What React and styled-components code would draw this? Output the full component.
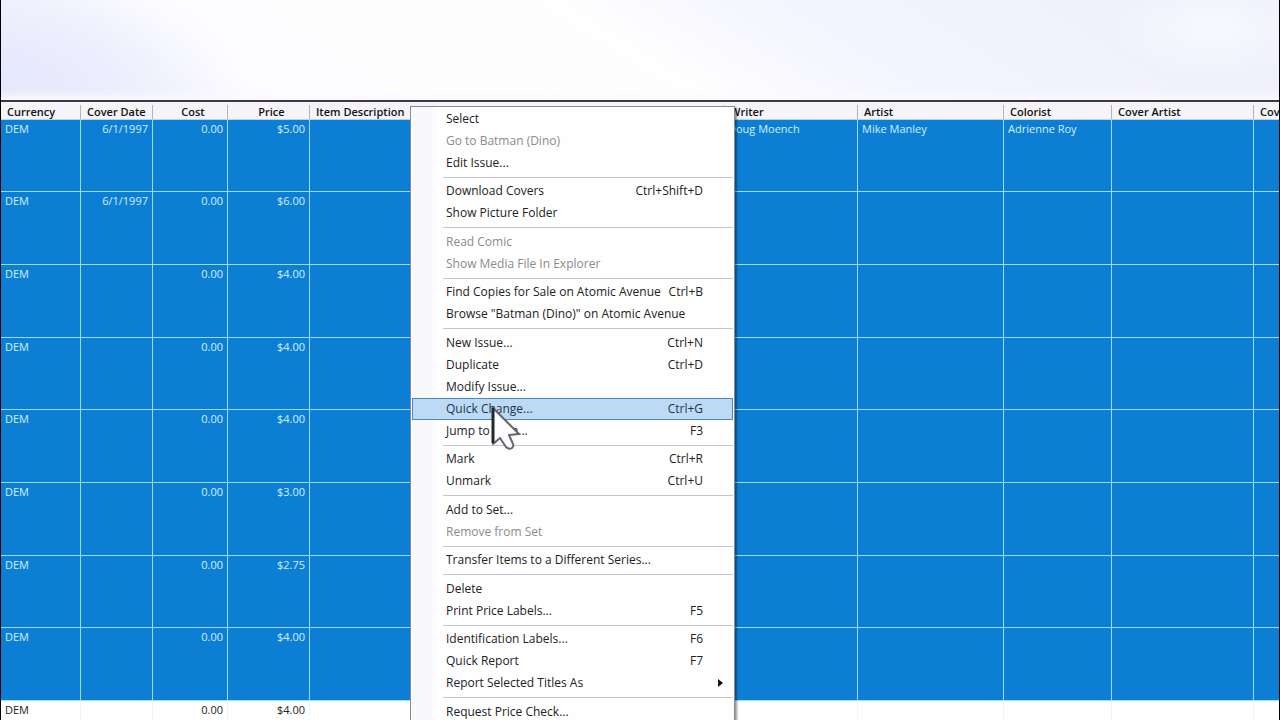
import React from 'react'
import styled, { createGlobalStyle } from 'styled-components'

const columns = [
    { key: 'currency', title: 'Currency', width: 80 },
    { key: 'coverDate', title: 'Cover Date', width: 72, align: 'right' },
    { key: 'cost', title: 'Cost', width: 75, align: 'right', center: true },
    { key: 'price', title: 'Price', width: 82, align: 'right', center: true },
    { key: 'description', title: 'Item Description', width: 414 },
    { key: 'writer', title: 'Writer', width: 134 },
    { key: 'artist', title: 'Artist', width: 146 },
    { key: 'colorist', title: 'Colorist', width: 108 },
    { key: 'coverArtist', title: 'Cover Artist', width: 142 },
    { key: 'cov', title: 'Cov' },
]

const issues = [
    { currency: 'DEM', coverDate: '6/1/1997', cost: '0.00', price: '$5.00', writer: 'Doug Moench', artist: 'Mike Manley', colorist: 'Adrienne Roy', selected: true },
    { currency: 'DEM', coverDate: '6/1/1997', cost: '0.00', price: '$6.00', selected: true },
    { currency: 'DEM', cost: '0.00', price: '$4.00', selected: true },
    { currency: 'DEM', cost: '0.00', price: '$4.00', selected: true },
    { currency: 'DEM', cost: '0.00', price: '$4.00', selected: true },
    { currency: 'DEM', cost: '0.00', price: '$3.00', selected: true },
    { currency: 'DEM', cost: '0.00', price: '$2.75', selected: true },
    { currency: 'DEM', cost: '0.00', price: '$4.00', selected: true },
    { currency: 'DEM', cost: '0.00', price: '$4.00' },
]

const menu = [
    { label: 'Select' },
    { label: 'Go to Batman (Dino)', disabled: true },
    { label: 'Edit Issue...' },
    null,
    { label: 'Download Covers', keys: 'Ctrl+Shift+D' },
    { label: 'Show Picture Folder' },
    null,
    { label: 'Read Comic', disabled: true },
    { label: 'Show Media File In Explorer', disabled: true },
    null,
    { label: 'Find Copies for Sale on Atomic Avenue', keys: 'Ctrl+B' },
    { label: 'Browse "Batman (Dino)" on Atomic Avenue' },
    null,
    { label: 'New Issue...', keys: 'Ctrl+N' },
    { label: 'Duplicate', keys: 'Ctrl+D' },
    { label: 'Modify Issue...' },
    { label: 'Quick Change...', keys: 'Ctrl+G', active: true },
    { label: 'Jump to Item...', keys: 'F3' },
    null,
    { label: 'Mark', keys: 'Ctrl+R' },
    { label: 'Unmark', keys: 'Ctrl+U' },
    null,
    { label: 'Add to Set...' },
    { label: 'Remove from Set', disabled: true },
    null,
    { label: 'Transfer Items to a Different Series...' },
    null,
    { label: 'Delete' },
    { label: 'Print Price Labels...', keys: 'F5' },
    null,
    { label: 'Identification Labels...', keys: 'F6' },
    { label: 'Quick Report', keys: 'F7' },
    { label: 'Report Selected Titles As', submenu: true },
    null,
    { label: 'Request Price Check...' },
]

const ContextMenu = () => (
    <Menu role="menu">
        {menu.map((item, i) => item ? (
            <MenuItem key={i} role="menuitem" disabled={item.disabled} $active={item.active}>
                <span>{item.label}</span>
                {item.keys ? <span>{item.keys}</span> : null}
                {item.submenu ? <Arrow viewBox="0 0 5 8"><path d="M0 0L5 4L0 8Z" /></Arrow> : null}
            </MenuItem>
        ) : <Separator key={i} />)}
    </Menu>
)

const App = () => {
    return (
        <>
            <GlobalStyle />
            <Page>
                <Banner />
                <Table>
                    <colgroup>
                        {columns.map((c) => <Col key={c.key} $width={c.width} />)}
                    </colgroup>
                    <thead>
                        <tr>
                            {columns.map((c) => (
                                <HeadCell key={c.key} $center={c.center}><HeadLabel>{c.title}</HeadLabel></HeadCell>
                            ))}
                        </tr>
                    </thead>
                    <tbody>
                        {issues.map((issue, i) => (
                            <Row key={i} $selected={issue.selected}>
                                {columns.map((c) => <Cell key={c.key} $align={c.align}>{issue[c.key]}</Cell>)}
                            </Row>
                        ))}
                    </tbody>
                </Table>
                <ContextMenu />
                <Cursor viewBox="0 0 32 46">
                    <path d="M3 3V39L10 33L16 42Q19 45 22 43Q24 41 23 39L19 30L29 29Z" />
                    <path className="edge" d="M3 3V38" />
                </Cursor>
            </Page>
        </>
    )
}

export default App;



const GlobalStyle = createGlobalStyle`
  * {
    box-sizing: border-box;
  }
  body {
    margin: 0;
    background: white;
    font-family: 'Open Sans', 'Noto Sans', sans-serif;
    font-size: 11px;
    color: #222;
  }
`;
const Page = styled.main`
  position: relative;
  height: 100vh;
  overflow: hidden;
  border: solid #000;
  border-width: 0 1px;
`;
const Banner = styled.header`
  height: 100px;
  background:
    linear-gradient(to top, rgba(250,249,253,0.9), rgba(250,249,253,0) 10px),
    radial-gradient(ellipse 100px 50px at 95% 28%, #f6faff, rgba(246,250,255,0)),
    radial-gradient(ellipse 240px 120px at 0% 80%, #e6e8fd, rgba(240,240,254,0)),
    linear-gradient(32deg, #f1f0fc 6%, #fdfdff 20%, #fefeff 50%, #f4f5fe 64%, #f2f2fc 80%, #efeffb);
`;
const Table = styled.table`
  width: 100%;
  table-layout: fixed;
  border-collapse: separate;
  border-spacing: 0;
  border-top: 2px solid #3c3a40;
`;
const Col = styled.col`
  width: ${({ $width }) => $width ? $width + 'px' : 'auto'};
`;
const HeadCell = styled.th`
  height: 17px;
  padding: 3px 0 0;
  background: #f6f4f8;
  border-bottom: 1px solid #b5d3ec;
  color: #111;
  font-weight: 600;
  text-align: ${({ $center }) => $center ? 'center' : 'left'};
  white-space: nowrap;
`;
const HeadLabel = styled.div`
  padding-left: 6px;
  line-height: 14px;
  border-right: 1px solid #b4b2ba;

  ${HeadCell}:last-child & {
    border-right: 0;
  }
`;
const Cell = styled.td`
  padding: 2px 4px;
  line-height: 14px;
  vertical-align: top;
  text-align: ${({ $align }) => $align || 'left'};
  white-space: nowrap;
  overflow: hidden;
`;
const Row = styled.tr`
  height: 73px;
  color: ${({ $selected }) => $selected ? '#d3efff' : '#222'};
  background: ${({ $selected }) => $selected ? '#0c7fd5' : 'white'};

  &:nth-child(3n+1){
    height: 72px;
  }
  ${Cell} {
    border: solid ${({ $selected }) => $selected ? '#98dfff' : '#f4f4f6'};
    border-width: 0 1px 1px 0;
  }
  ${Cell}:last-child {
    border-right: 0;
  }
`;
const Menu = styled.div`
  position: absolute;
  z-index: 10;
  top: 106px;
  left: 409px;
  width: 325px;
  padding: 1px;
  display: flex;
  flex-direction: column;
  background: linear-gradient(to right, #f9f8fb 20px, #fefeff 26px);
  border: 1px solid #8a8a90;
  box-shadow: 2px 2px 2px rgba(0,0,0,0.4);
`;
const MenuItem = styled.button`
  display: flex;
  justify-content: space-between;
  align-items: center;
  height: 22px;
  padding: 0 29px 0 33px;
  border: 1px solid ${({ $active }) => $active ? '#4a8abf' : 'transparent'};
  background: ${({ $active }) => $active ? '#bcdaf3' : 'transparent'};
  color: ${({ $active }) => $active ? '#1c3450' : '#222'};
  font: inherit;
  font-size: 12px;
  line-height: 16px;
  white-space: nowrap;

  &:disabled {
    color: #8b8b8e;
  }
`;
const Separator = styled.hr`
  height: 6px;
  margin: 0 0 0 31px;
  border: 0;
  background: linear-gradient(#c6c6ca, #c6c6ca) 0 3px / 100% 1px no-repeat;

  &:nth-of-type(even){
    height: 7px;
  }
`;
const Arrow = styled.svg`
  width: 5px;
  height: 8px;
  margin-right: -20px;
  fill: #111;
`;
const Cursor = styled.svg`
  position: absolute;
  z-index: 20;
  top: 405px;
  left: 489px;
  width: 32px;
  height: 46px;
  fill: #fdfdff;
  stroke: #66666e;
  stroke-width: 2;
  stroke-linejoin: round;

  .edge {
    stroke: #26262c;
    stroke-width: 3;
  }
`;
